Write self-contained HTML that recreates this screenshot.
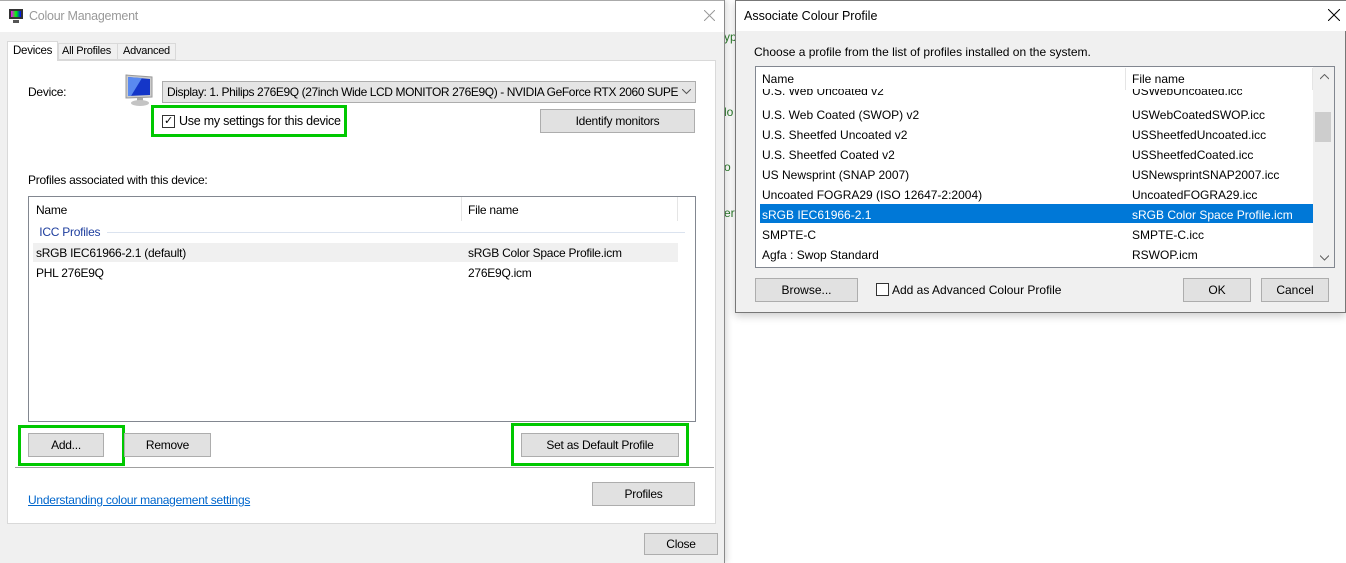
<!DOCTYPE html>
<html><head><meta charset="utf-8"><style>
*{box-sizing:border-box;margin:0;padding:0}
body{width:1346px;height:563px;background:#fff;font-family:"Liberation Sans",sans-serif;font-size:12px;color:#000;position:relative;overflow:hidden}
.a{position:absolute;white-space:nowrap}
.btn{position:absolute;background:#e1e1e1;border:1px solid #adadad;text-align:center;font-size:12px}
.grn{position:absolute;border:3px solid #00c800}
.L{letter-spacing:-0.25px}
</style></head><body>
<div class="a" style="left:724px;top:30px;color:#2a7a2a">yp</div>
<div class="a" style="left:724px;top:105px;color:#2a7a2a">lo</div>
<div class="a" style="left:724px;top:160px;color:#2a7a2a">o</div>
<div class="a" style="left:724px;top:206px;color:#2a7a2a">ert</div>

<div class="L">
<div class="a" style="left:0;top:0;width:725px;height:563px;background:#f0f0f0;border-right:1px solid #8a8a8a;box-shadow:2px 0 6px rgba(0,0,0,.15)"></div>
<div class="a" style="left:0;top:0;width:724px;height:32px;background:#fff;border-top:1px solid #aaa"></div>
<svg class="a" style="left:8px;top:8px" width="16" height="16"><rect x="1" y="1" width="14" height="10" fill="#333"/><rect x="3" y="3" width="10" height="6" fill="url(#g)"/><defs><linearGradient id="g"><stop offset="0" stop-color="#f0f"/><stop offset=".5" stop-color="#0f0"/><stop offset="1" stop-color="#00f"/></linearGradient></defs><rect x="5" y="12" width="6" height="3" fill="#555"/></svg>
<div class="a" style="left:29px;top:9px;color:#999;font-size:12.5px">Colour Management</div>
<svg class="a" style="left:704px;top:10px" width="11" height="11"><path d="M0 0L11 11M11 0L0 11" stroke="#999" stroke-width="1"/></svg>
<div class="a" style="left:7px;top:41px;width:51px;height:20px;background:#fff;border:1px solid #d9d9d9;border-bottom:none;z-index:2;padding:3px 0 0 5px;font-size:11.5px">Devices</div>
<div class="a" style="left:58px;top:43px;width:60px;height:17px;background:#f0f0f0;border:1px solid #d9d9d9;padding:1px 0 0 3px;font-size:11px">All Profiles</div>
<div class="a" style="left:117px;top:43px;width:59px;height:17px;background:#f0f0f0;border:1px solid #d9d9d9;padding:1px 0 0 5px;font-size:11px">Advanced</div>
<div class="a" style="left:7px;top:60px;width:709px;height:464px;background:#fff;border:1px solid #d9d9d9"></div>
<div class="a" style="left:28px;top:85px">Device:</div>
<svg class="a" style="left:122px;top:72px" width="34" height="36"><path d="M4 3 L30 5 L30 25 L4 26Z" fill="#ccc" stroke="#999"/><path d="M6 5 L28 7 L28 23 L6 24Z" fill="#1436c8"/><path d="M6 5 L20 6 L9 24 L6 24Z" fill="#5a8af0"/><rect x="15" y="26" width="6" height="4" fill="#aaa"/><ellipse cx="18" cy="31" rx="9" ry="3" fill="#c4c4c4"/></svg>
<div class="a" style="left:162px;top:81px;width:534px;height:22px;background:#e5e5e5;border:1px solid #adadad;padding:3px 0 0 4px;overflow:hidden;letter-spacing:-0.4px"><span style="display:inline-block;width:512px;overflow:hidden">Display: 1. Philips 276E9Q (27inch Wide LCD MONITOR 276E9Q) - NVIDIA GeForce RTX 2060 SUPEF</span></div>
<svg class="a" style="left:682px;top:89px" width="9" height="6"><path d="M0 0L4.5 4.5L9 0" stroke="#555" fill="none"/></svg>
<div class="grn" style="left:151px;top:105px;width:196px;height:32px"></div>
<div class="a" style="left:162px;top:115px;width:13px;height:13px;border:1px solid #333;background:#fff;font-size:11px;line-height:11px;text-align:center">✓</div>
<div class="a" style="left:179px;top:114px;font-size:12.5px">Use my settings for this device</div>
<div class="btn" style="left:540px;top:109px;width:155px;height:24px;line-height:22px">Identify monitors</div>
<div class="a" style="left:28px;top:173px">Profiles associated with this device:</div>
<div class="a" style="left:28px;top:196px;width:668px;height:226px;background:#fff;border:1px solid #828790"></div>
<div class="a" style="left:36px;top:203px">Name</div>
<div class="a" style="left:461px;top:197px;width:1px;height:24px;background:#e5e5e5"></div>
<div class="a" style="left:677px;top:197px;width:1px;height:24px;background:#e5e5e5"></div>
<div class="a" style="left:468px;top:203px">File name</div>
<div class="a" style="left:30px;top:225px;color:#1e3e9e">&nbsp;&nbsp;&nbsp;ICC Profiles</div>
<div class="a" style="left:107px;top:232px;width:578px;height:1px;background:#dbe3ef"></div>
<div class="a" style="left:33px;top:243px;width:645px;height:19px;background:#f0f0f0"></div>
<div class="a" style="left:36px;top:246px">sRGB IEC61966-2.1 (default)</div>
<div class="a" style="left:468px;top:246px">sRGB Color Space Profile.icm</div>
<div class="a" style="left:36px;top:266px">PHL 276E9Q</div>
<div class="a" style="left:468px;top:266px">276E9Q.icm</div>
<div class="grn" style="left:18px;top:425px;width:107px;height:41px"></div>
<div class="btn" style="left:28px;top:433px;width:76px;height:24px;line-height:22px">Add...</div>
<div class="btn" style="left:124px;top:433px;width:87px;height:24px;line-height:22px">Remove</div>
<div class="grn" style="left:511px;top:423px;width:178px;height:43px"></div>
<div class="btn" style="left:521px;top:433px;width:158px;height:24px;line-height:22px">Set as Default Profile</div>
<div class="a" style="left:15px;top:467px;width:699px;height:1px;background:#a0a0a0"></div>
<div class="btn" style="left:592px;top:482px;width:103px;height:24px;line-height:22px">Profiles</div>
<div class="a" style="left:28px;top:493px;color:#0066cc;text-decoration:underline">Understanding colour management settings</div>
<div class="btn" style="left:644px;top:533px;width:74px;height:22px;line-height:20px">Close</div>
</div>

<div class="a" style="left:735px;top:0;width:611px;height:313px;background:#f0f0f0;border:1px solid #777;box-shadow:0 3px 8px rgba(0,0,0,.2)"></div>
<div class="a" style="left:736px;top:1px;width:610px;height:30px;background:#fff"></div>
<div class="a" style="left:744px;top:9px;font-size:12.5px">Associate Colour Profile</div>
<svg class="a" style="left:1328px;top:9px" width="12" height="12"><path d="M0 0L12 12M12 0L0 12" stroke="#000" stroke-width="1"/></svg>
<div class="a" style="left:754px;top:45px">Choose a profile from the list of profiles installed on the system.</div>
<div class="a" style="left:755px;top:66px;width:580px;height:202px;background:#fff;border:1px solid #828790;overflow:hidden">
 <div class="a" style="left:6px;top:22px;height:9px;overflow:hidden;line-height:10px"><span style="position:relative;top:-3px">U.S. Web Uncoated v2</span></div>
 <div class="a" style="left:376px;top:22px;height:9px;overflow:hidden;line-height:10px"><span style="position:relative;top:-3px">USWebUncoated.icc</span></div>
 <div class="a" style="left:1px;top:1px;width:557px;height:21px;background:#fff"></div>
 <div class="a" style="left:369px;top:1px;width:1px;height:22px;background:#e5e5e5"></div>
 <div class="a" style="left:556px;top:1px;width:1px;height:22px;background:#e5e5e5"></div>
 <div class="a" style="left:6px;top:5px">Name</div>
 <div class="a" style="left:376px;top:5px">File name</div>
 <div class="a" style="left:6px;top:41px">U.S. Web Coated (SWOP) v2</div><div class="a" style="left:376px;top:41px">USWebCoatedSWOP.icc</div>
 <div class="a" style="left:6px;top:61px">U.S. Sheetfed Uncoated v2</div><div class="a" style="left:376px;top:61px">USSheetfedUncoated.icc</div>
 <div class="a" style="left:6px;top:81px">U.S. Sheetfed Coated v2</div><div class="a" style="left:376px;top:81px">USSheetfedCoated.icc</div>
 <div class="a" style="left:6px;top:101px">US Newsprint (SNAP 2007)</div><div class="a" style="left:376px;top:101px">USNewsprintSNAP2007.icc</div>
 <div class="a" style="left:6px;top:121px">Uncoated FOGRA29 (ISO 12647-2:2004)</div><div class="a" style="left:376px;top:121px">UncoatedFOGRA29.icc</div>
 <div class="a" style="left:4px;top:137px;width:553px;height:19px;background:#0078d7"></div>
 <div class="a" style="left:6px;top:141px;color:#fff">sRGB IEC61966-2.1</div><div class="a" style="left:376px;top:141px;color:#fff">sRGB Color Space Profile.icm</div>
 <div class="a" style="left:6px;top:161px">SMPTE-C</div><div class="a" style="left:376px;top:161px">SMPTE-C.icc</div>
 <div class="a" style="left:6px;top:181px">Agfa : Swop Standard</div><div class="a" style="left:376px;top:181px">RSWOP.icm</div>
 <div class="a" style="left:557px;top:0;width:22px;height:200px;background:#f0f0f0"></div>
 <svg class="a" style="left:564px;top:7px" width="9" height="6"><path d="M0 5L4.5 0.5L9 5" stroke="#606060" fill="none"/></svg>
 <div class="a" style="left:559px;top:45px;width:16px;height:30px;background:#cdcdcd"></div>
 <svg class="a" style="left:564px;top:188px" width="9" height="6"><path d="M0 0.5L4.5 5L9 0.5" stroke="#606060" fill="none"/></svg>
</div>
<div class="btn" style="left:755px;top:278px;width:103px;height:24px;line-height:22px">Browse...</div>
<div class="a" style="left:876px;top:283px;width:13px;height:13px;border:1px solid #333;background:#fff"></div>
<div class="a" style="left:892px;top:283px">Add as Advanced Colour Profile</div>
<div class="btn" style="left:1183px;top:278px;width:68px;height:24px;line-height:22px">OK</div>
<div class="btn" style="left:1261px;top:278px;width:68px;height:24px;line-height:22px">Cancel</div>
</body></html>
